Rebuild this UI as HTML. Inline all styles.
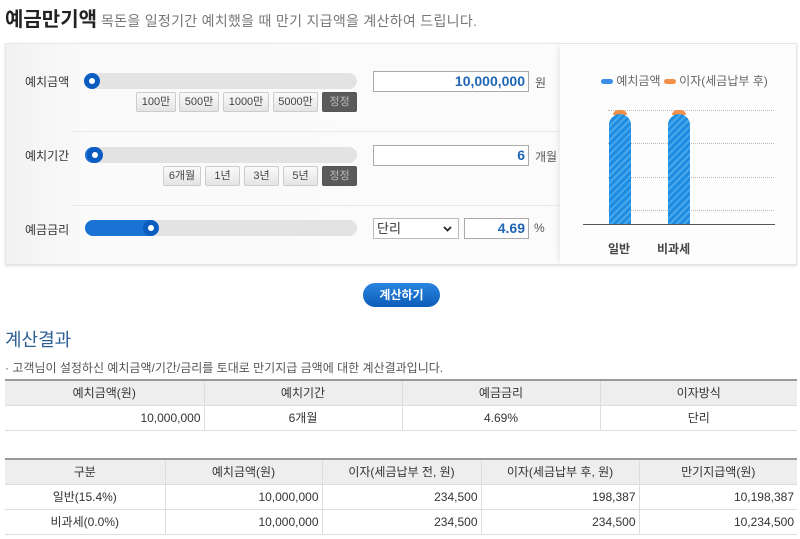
<!DOCTYPE html>
<html><head><meta charset="utf-8"><style>
*{margin:0;padding:0;box-sizing:border-box}
body{width:800px;height:539px;background:#fff;font-family:"Liberation Sans","Noto Sans CJK KR",sans-serif;color:#333;position:relative;overflow:hidden}
.a{position:absolute}
.title{left:5px;top:3px;font-size:20px;font-weight:bold;color:#222;white-space:nowrap}
.title span{font-size:14px;font-weight:normal;color:#777;margin-left:4px;letter-spacing:0.3px}
.panel{left:5px;top:43px;width:792px;height:222px;border:1px solid #e6e6e6;background:linear-gradient(90deg,#f2f2f2 0,#fafafa 80px,#fcfcfc 100%);box-shadow:0 1px 2px #ddd}
.chart{left:560px;top:44px;width:236px;height:220px;background:#fdfdfd;box-shadow:-4px 0 6px -3px #e2e2e2}
.lbl{font-size:12px;color:#333}
.track{height:16px;border-radius:8px;background:#e3e3e3}
.fill{height:16px;border-radius:8px 0 0 8px;background:#1a72d4}
.knob{width:16px;height:16px;border-radius:50%;background:#0b5cc0;border:4px solid #0b5cc0}
.knob::after{content:"";display:block;width:6px;height:6px;border-radius:50%;background:#fff;margin:1px}
.btn{height:20px;font-size:11px;color:#444;background:linear-gradient(#fafafa,#e4e4e4);border:1px solid #ccc;border-radius:2px;text-align:center;line-height:18px}
.btn.d{background:#5a5a5a;color:#bbb;border-color:#555}
.inp{height:21px;border:1px solid #aaa;background:#fff;font-size:14px;font-weight:bold;color:#1f66b5;text-align:right;padding-right:3px;line-height:19px}
.unit{font-size:12px;color:#555}
.div{height:1px;background:#e8e8e8}
.grid{left:608px;width:166px;border-top:1px dotted #bbb;height:0}
.bar{width:22px;border-radius:11px 11px 0 0;background:repeating-linear-gradient(135deg,#1e8ce0 0 3px,#48a8ee 3px 5px);}
.cap{width:14px;height:5px;border-radius:7px 7px 0 0;background:#f39048}
table{border-collapse:collapse;position:absolute;font-size:12px;color:#333}
th{background:#eee;font-weight:normal;height:25px;border-left:1px solid #ddd;border-bottom:1px solid #ddd}
td{height:25px;border-left:1px solid #ddd;border-bottom:1px solid #ddd;padding:0 3px}
th:first-child,td:first-child{border-left:none}
table{border-top:2px solid #999}
.r{text-align:right}.c{text-align:center}
</style></head><body>
<div class="a title">예금만기액<span>목돈을 일정기간 예치했을 때 만기 지급액을 계산하여 드립니다.</span></div>
<div class="a panel"></div>
<div class="a chart"></div>

<div class="a lbl" style="left:25px;top:73px">예치금액</div>
<div class="a track" style="left:85px;top:73px;width:272px"></div>
<div class="a knob" style="left:84px;top:73px"></div>
<div class="a btn" style="left:136px;top:92px;width:40px">100만</div>
<div class="a btn" style="left:179px;top:92px;width:40px">500만</div>
<div class="a btn" style="left:223px;top:92px;width:46px">1000만</div>
<div class="a btn" style="left:273px;top:92px;width:45px">5000만</div>
<div class="a btn d" style="left:322px;top:92px;width:35px">정정</div>
<div class="a inp" style="left:373px;top:71px;width:156px">10,000,000</div>
<div class="a unit" style="left:535px;top:74px">원</div>
<div class="a div" style="left:72px;top:131px;width:488px"></div>

<div class="a lbl" style="left:25px;top:147px">예치기간</div>
<div class="a track" style="left:85px;top:147px;width:272px"></div>
<div class="a fill" style="left:85px;top:147px;width:8px"></div>
<div class="a knob" style="left:87px;top:147px"></div>
<div class="a btn" style="left:163px;top:166px;width:38px">6개월</div>
<div class="a btn" style="left:205px;top:166px;width:35px">1년</div>
<div class="a btn" style="left:244px;top:166px;width:35px">3년</div>
<div class="a btn" style="left:283px;top:166px;width:35px">5년</div>
<div class="a btn d" style="left:322px;top:166px;width:35px">정정</div>
<div class="a inp" style="left:373px;top:145px;width:156px">6</div>
<div class="a unit" style="left:535px;top:148px">개월</div>
<div class="a div" style="left:72px;top:205px;width:488px"></div>

<div class="a lbl" style="left:25px;top:221px">예금금리</div>
<div class="a track" style="left:85px;top:220px;width:272px"></div>
<div class="a fill" style="left:85px;top:220px;width:65px"></div>
<div class="a knob" style="left:143px;top:220px"></div>
<div class="a" style="left:373px;top:218px;width:86px;height:21px;border:1px solid #bbb;background:#fff;font-size:13px;padding-left:3px;line-height:19px">단리<svg style="position:absolute;right:6px;top:7px" width="9" height="6" viewBox="0 0 9 6"><path d="M1 1L4.5 4.5L8 1" stroke="#222" stroke-width="1.8" fill="none"/></svg></div>
<div class="a inp" style="left:464px;top:218px;width:65px">4.69</div>
<div class="a unit" style="left:534px;top:221px">%</div>

<div class="a" style="left:601px;top:72px;font-size:12px;color:#666;white-space:nowrap"><span style="display:inline-block;width:12px;height:5px;border-radius:3px;background:#3a8ee8;vertical-align:middle"></span> 예치금액 <span style="display:inline-block;width:12px;height:5px;border-radius:3px;background:#f39048;vertical-align:middle"></span> 이자(세금납부 후)</div>
<div class="a grid" style="top:110px"></div>
<div class="a grid" style="top:143px"></div>
<div class="a grid" style="top:177px"></div>
<div class="a grid" style="top:210px"></div>
<div class="a cap" style="left:613px;top:110px"></div>
<div class="a cap" style="left:672px;top:110px"></div>
<div class="a bar" style="left:609px;top:114px;height:110px"></div>
<div class="a bar" style="left:668px;top:114px;height:110px"></div>
<div class="a" style="left:583px;top:224px;width:192px;height:1px;background:#555"></div>
<div class="a" style="left:608px;top:240px;font-size:12px;font-weight:bold;color:#444">일반</div>
<div class="a" style="left:657px;top:240px;font-size:12px;font-weight:bold;color:#444">비과세</div>

<div class="a" style="left:363px;top:283px;width:77px;height:24px;border-radius:12px;background:linear-gradient(#2a86e0,#0c5cb8);color:#fff;font-size:12px;font-weight:bold;text-align:center;line-height:24px">계산하기</div>
<div class="a" style="left:5px;top:326px;font-size:18px;color:#2d5f95">계산결과</div>
<div class="a" style="left:5px;top:359px;font-size:12px;color:#555">· 고객님이 설정하신 예치금액/기간/금리를 토대로 만기지급 금액에 대한 계산결과입니다.</div>

<table style="left:5px;top:379px;width:792px">
<tr><th style="width:199px">예치금액(원)</th><th style="width:198px">예치기간</th><th style="width:198px">예금금리</th><th>이자방식</th></tr>
<tr><td class="r">10,000,000</td><td class="c">6개월</td><td class="c">4.69%</td><td class="c">단리</td></tr>
</table>
<table style="left:5px;top:458px;width:792px">
<tr><th style="width:160px">구분</th><th style="width:157px">예치금액(원)</th><th style="width:159px">이자(세금납부 전, 원)</th><th style="width:158px">이자(세금납부 후, 원)</th><th>만기지급액(원)</th></tr>
<tr><td class="c">일반(15.4%)</td><td class="r">10,000,000</td><td class="r">234,500</td><td class="r">198,387</td><td class="r">10,198,387</td></tr>
<tr><td class="c">비과세(0.0%)</td><td class="r">10,000,000</td><td class="r">234,500</td><td class="r">234,500</td><td class="r">10,234,500</td></tr>
</table>
</body></html>
